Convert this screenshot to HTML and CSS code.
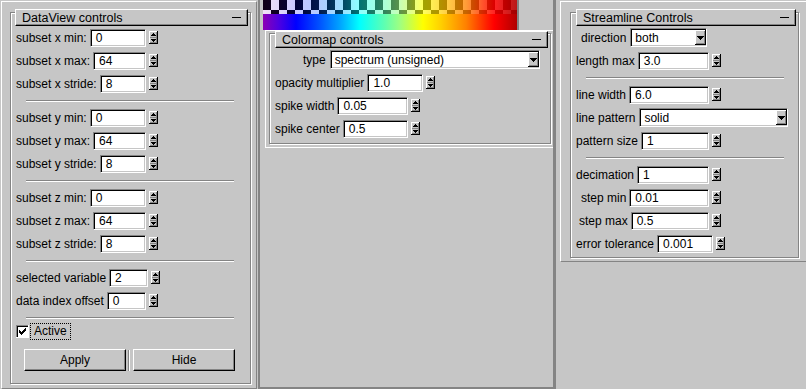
FILE: index.html
```html
<!DOCTYPE html>
<html>
<head>
<meta charset="utf-8">
<link rel="stylesheet" href="styles.css">
</head>
<body>
<svg class="defs" width="0" height="0">
  <defs>
    <symbol id="spin" viewBox="0 0 9 13" shape-rendering="crispEdges">
      <rect width="9" height="13" fill="#c6c6c6"/>
      <path d="M0 0H9V1H1V13H0Z" fill="#fff"/>
      <path d="M8 0H9V13H0V12H8Z" fill="#000"/>
      <path d="M7 1H8V12H1V11H7Z" fill="#848484"/>
      <path d="M1 6H8V7H1Z" fill="#848484"/>
      <path d="M4 2h1v1h-1zM3 3h3v1h-3zM2 4h5v1h-5z" fill="#000"/>
      <path d="M2 8h5v1h-5zM3 9h3v1h-3zM4 10h1v1h-1z" fill="#000"/>
    </symbol>
    <symbol id="drop" viewBox="0 0 11 15" shape-rendering="crispEdges">
      <rect width="11" height="15" fill="#c6c6c6"/>
      <path d="M0 0H11V1H1V15H0Z" fill="#fff"/>
      <path d="M10 0H11V15H0V14H10Z" fill="#000"/>
      <path d="M9 1H10V14H1V13H9Z" fill="#848484"/>
      <path d="M2 6h7v1h-7zM3 7h5v1h-5zM4 8h3v1h-3zM5 9h1v1h-1z" fill="#000"/>
    </symbol>
  </defs>
</svg>
<div class="screen">
  <div class="col-left">
    <div class="panel-left">
      <div class="group group-data">
        <div class="title title-data"><span class="title-text">DataView controls</span><span class="collapse"></span></div>
        <div class="row w142"><span class="lbl">subset x min:</span><span class="field">0</span><svg class="spin"><use href="#spin"/></svg></div>
        <div class="row w142"><span class="lbl">subset x max:</span><span class="field">64</span><svg class="spin"><use href="#spin"/></svg></div>
        <div class="row w142"><span class="lbl">subset x stride:</span><span class="field">8</span><svg class="spin"><use href="#spin"/></svg></div>
        <div class="sep sep-left"></div>
        <div class="row w142"><span class="lbl">subset y min:</span><span class="field">0</span><svg class="spin"><use href="#spin"/></svg></div>
        <div class="row w142"><span class="lbl">subset y max:</span><span class="field">64</span><svg class="spin"><use href="#spin"/></svg></div>
        <div class="row w142"><span class="lbl">subset y stride:</span><span class="field">8</span><svg class="spin"><use href="#spin"/></svg></div>
        <div class="sep sep-left"></div>
        <div class="row w142"><span class="lbl">subset z min:</span><span class="field">0</span><svg class="spin"><use href="#spin"/></svg></div>
        <div class="row w142"><span class="lbl">subset z max:</span><span class="field">64</span><svg class="spin"><use href="#spin"/></svg></div>
        <div class="row w142"><span class="lbl">subset z stride:</span><span class="field">8</span><svg class="spin"><use href="#spin"/></svg></div>
        <div class="sep sep-left"></div>
        <div class="row w144"><span class="lbl">selected variable</span><span class="field">2</span><svg class="spin"><use href="#spin"/></svg></div>
        <div class="row w142"><span class="lbl">data index offset</span><span class="field">0</span><svg class="spin"><use href="#spin"/></svg></div>
        <div class="sep sep-left"></div>
        <div class="check-row">
          <svg class="checkbox" width="13" height="13" viewBox="0 0 13 13" shape-rendering="crispEdges">
            <rect width="13" height="13" fill="#fff"/>
            <path d="M0 0H13V1H1V13H0Z" fill="#848484"/>
            <path d="M1 1H12V2H2V12H1Z" fill="#000"/>
            <path d="M12 0H13V13H0V12H12Z" fill="#fff"/>
            <path d="M3 5h1v3h-1zM4 6h1v3h-1zM5 7h1v3h-1zM6 6h1v3h-1zM7 5h1v3h-1zM8 4h1v3h-1zM9 3h1v3h-1z" fill="#000"/>
          </svg>
          <span class="focus">Active</span>
        </div>
        <div class="btn-row">
          <div class="btn">Apply</div>
          <div class="vsep"></div>
          <div class="btn">Hide</div>
        </div>
      </div>
    </div>
  </div>

  <div class="col-mid">
    <div class="cmap">
      <div class="cmap-alpha"></div>
      <div class="cmap-solid"></div>
    </div>
    <div class="mid-frame">
      <div class="group group-cmap">
        <div class="title title-cmap"><span class="title-text">Colormap controls</span><span class="collapse"></span></div>
        <div class="row row-type"><span class="lbl">type</span><span class="select"><span class="sel-text">spectrum (unsigned)</span><svg class="drop"><use href="#drop"/></svg></span></div>
        <div class="row w160"><span class="lbl">opacity multiplier</span><span class="field">1.0</span><svg class="spin"><use href="#spin"/></svg></div>
        <div class="row w145"><span class="lbl">spike width</span><span class="field">0.05</span><svg class="spin"><use href="#spin"/></svg></div>
        <div class="row w145"><span class="lbl">spike center</span><span class="field">0.5</span><svg class="spin"><use href="#spin"/></svg></div>
      </div>
    </div>
  </div>

  <div class="col-right">
    <div class="panel-right">
      <div class="group group-stream">
        <div class="title title-stream"><span class="title-text">Streamline Controls</span><span class="collapse"></span></div>
        <div class="row row-dir"><span class="lbl">direction</span><span class="select"><span class="sel-text">both</span><svg class="drop"><use href="#drop"/></svg></span></div>
        <div class="row w145"><span class="lbl">length max</span><span class="field">3.0</span><svg class="spin"><use href="#spin"/></svg></div>
        <div class="sep sep-right"></div>
        <div class="row w145"><span class="lbl">line width</span><span class="field">6.0</span><svg class="spin"><use href="#spin"/></svg></div>
        <div class="row row-pattern"><span class="lbl">line pattern</span><span class="select"><span class="sel-text">solid</span><svg class="drop"><use href="#drop"/></svg></span></div>
        <div class="row w145"><span class="lbl">pattern size</span><span class="field">1</span><svg class="spin"><use href="#spin"/></svg></div>
        <div class="sep sep-right"></div>
        <div class="row w145"><span class="lbl">decimation</span><span class="field">1</span><svg class="spin"><use href="#spin"/></svg></div>
        <div class="row row-stepmin"><span class="lbl">step min</span><span class="field">0.01</span><svg class="spin"><use href="#spin"/></svg></div>
        <div class="row row-stepmax"><span class="lbl">step max</span><span class="field">0.5</span><svg class="spin"><use href="#spin"/></svg></div>
        <div class="row w149"><span class="lbl">error tolerance</span><span class="field">0.001</span><svg class="spin"><use href="#spin"/></svg></div>
      </div>
    </div>
  </div>
</div>
</body>
</html>
```

FILE: styles.css
```css
* { box-sizing: border-box; }

body {
  margin: 0;
  background: #c6c6c6;
  font-family: "Liberation Sans", Arial, Helvetica, sans-serif;
  font-size: 12px;
  color: #000;
}

.defs { position: absolute; width: 0; height: 0; }

.screen {
  display: flex;
  width: 806px;
  height: 389px;
  overflow: hidden;
}

/* ---------- shared widgets ---------- */
.group {
  border: 1px solid #848484;
  box-shadow: inset 1px 1px 0 #fff, 1px 1px 0 #fff;
}

.title {
  display: flex;
  align-items: center;
  height: 17px;
  background: #c6c6c6;
  border: 1px solid;
  border-color: #fff #000 #000 #fff;
  box-shadow: inset -1px -1px 0 #848484;
  padding-left: 6px;
  font-size: 12.5px;
  white-space: nowrap;
}
.title-text { flex: 1; }
.collapse {
  width: 9px;
  height: 1px;
  background: #000;
  margin-right: 6px;
}

.row {
  display: flex;
  align-items: center;
  height: 23px;
  margin-left: 5px;
}
.lbl { white-space: nowrap; }

.field {
  flex: 1;
  min-width: 0;
  height: 18px;
  margin-left: 3px;
  background: #fff;
  border: 1px solid;
  border-color: #848484 #fff #fff #848484;
  box-shadow: inset 1px 1px 0 #000, inset -1px -1px 0 #c6c6c6;
  padding-left: 5px;
  line-height: 16px;
  white-space: nowrap;
}

.spin {
  flex: none;
  width: 9px;
  height: 13px;
  margin-left: 3px;
}

.select {
  flex: 1;
  display: flex;
  align-items: center;
  height: 19px;
  margin-left: 4px;
  background: #fff;
  border: 1px solid;
  border-color: #848484 #fff #fff #848484;
  box-shadow: inset 1px 1px 0 #000, inset -1px -1px 0 #c6c6c6;
  padding-left: 4px;
  white-space: nowrap;
}
.sel-text { flex: 1; }
.drop {
  flex: none;
  width: 11px;
  height: 15px;
}

.sep {
  height: 2px;
  border-top: 1px solid #848484;
  border-bottom: 1px solid #fff;
  margin-top: 5px;
  margin-bottom: 4px;
}

.w142 { width: 142px; }
.w144 { width: 144px; }
.w145 { width: 145px; }
.w149 { width: 149px; }
.w160 { width: 160px; }

/* ---------- left column ---------- */
.col-left {
  flex: none;
  width: 258px;
  height: 389px;
  padding: 1px 0 0 1px;
}
.panel-left {
  width: 256px;
  height: 388px;
  border-top: 1px solid #fff;
  border-left: 1px solid #fff;
  border-right: 1px solid #848484;
  border-bottom: 1px solid #848484;
  padding: 10px 0 0 8px;
}
.group-data {
  width: 241px;
  height: 372px;
}
.title-data { margin: -4px 2px 0 4px; }
.sep-left { margin-left: 15px; margin-right: 16px; }

.check-row {
  display: flex;
  align-items: center;
  height: 17px;
  margin: 3px 0 0 5px;
}
.checkbox { flex: none; }
.focus {
  margin-left: 1px;
  height: 17px;
  line-height: 15px;
  border: 1px dotted #000;
  padding: 0 3px;
}

.btn-row {
  display: flex;
  height: 22px;
  margin: 9px 0 0 13px;
}
.btn {
  width: 102px;
  height: 22px;
  display: flex;
  align-items: center;
  justify-content: center;
  border: 1px solid;
  border-color: #fff #000 #000 #fff;
  box-shadow: inset -1px -1px 0 #848484;
}
.vsep {
  width: 2px;
  border-left: 1px solid #848484;
  border-right: 1px solid #fff;
  margin: 1px 3px 0 2px;
}

/* ---------- middle column ---------- */
.col-mid {
  flex: none;
  width: 297px;
  height: 389px;
  border-left: 2px solid #848484;
  border-right: 2px solid #848484;
  border-bottom: 2px solid #848484;
}
.cmap {
  width: 256px;
  height: 30px;
  margin-left: 3px;
  border-right: 2px solid #848484;
}
.cmap-alpha {
  height: 14px;
  background:
    linear-gradient(to right,
      rgba(140, 0, 180, 0.12) 0%,
      rgba(80, 0, 224, 0.16) 6%,
      rgba(0, 0, 255, 0.22) 13%,
      rgba(0, 80, 255, 0.3) 22%,
      rgba(0, 160, 255, 0.38) 30%,
      rgba(0, 255, 255, 0.45) 38%,
      rgba(96, 255, 176, 0.52) 48%,
      rgba(160, 255, 128, 0.58) 54%,
      rgba(255, 255, 0, 0.64) 63%,
      rgba(255, 208, 0, 0.7) 70%,
      rgba(255, 128, 0, 0.78) 80%,
      rgba(255, 32, 0, 0.84) 88%,
      rgba(255, 0, 0, 0.86) 91%,
      rgba(176, 0, 0, 0.9) 100%),
    repeating-conic-gradient(#fff 0 25%, #000 0 50%) 0 0 / 16px 20px;
}
.cmap-solid {
  height: 16px;
  background: linear-gradient(to right,
    #8c00b4 0%, #5000e0 6%, #0000ff 13%, #0050ff 22%, #00a0ff 30%,
    #00ffff 38%, #60ffb0 48%, #a0ff80 54%, #ffff00 63%, #ffd000 70%,
    #ff8000 80%, #ff2000 88%, #ff0000 91%, #b00000 100%);
}
.mid-frame {
  width: 288px;
  height: 118px;
  margin-left: 5px;
  border-top: 1px solid #fff;
  border-left: 1px solid #fff;
  border-bottom: 1px solid #fff;
  padding: 2px 0 0 3px;
}
.group-cmap {
  width: 282px;
  height: 111px;
}
.title-cmap { margin: -3px 2px 0 5px; }
.row-type { margin-left: 33px; width: 237px; }

/* ---------- right column ---------- */
.col-right {
  flex: 1;
  height: 389px;
  padding: 1px 0 0 4px;
  border-left: 1px solid #848484;
}
.panel-right {
  width: 247px;
  height: 261px;
  border-top: 1px solid #fff;
  border-left: 1px solid #fff;
  border-bottom: 1px solid #848484;
  padding: 10px 0 0 9px;
}
.group-stream {
  width: 229px;
  height: 246px;
}
.title-stream { margin: -4px 2px 0 5px; }
.sep-right { margin-left: 15px; margin-right: 14px; }
.row-dir { margin-left: 10px; width: 126px; }
.row-pattern { width: 212px; }
.row-stepmin { margin-left: 10px; width: 140px; }
.row-stepmax { margin-left: 8px; width: 142px; }
```
